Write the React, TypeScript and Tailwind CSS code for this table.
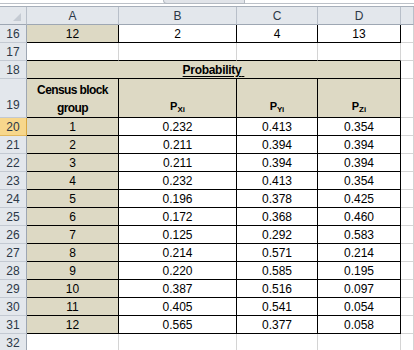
import React from "react";

const rows: [string, string, string, string][] = [
  ["1", "0.232", "0.413", "0.354"],
  ["2", "0.211", "0.394", "0.394"],
  ["3", "0.211", "0.394", "0.394"],
  ["4", "0.232", "0.413", "0.354"],
  ["5", "0.196", "0.378", "0.425"],
  ["6", "0.172", "0.368", "0.460"],
  ["7", "0.125", "0.292", "0.583"],
  ["8", "0.214", "0.571", "0.214"],
  ["9", "0.220", "0.585", "0.195"],
  ["10", "0.387", "0.516", "0.097"],
  ["11", "0.405", "0.541", "0.054"],
  ["12", "0.565", "0.377", "0.058"],
];

const hdrCol =
  "bg-[#e3e7ec] border-r border-b border-r-[#b8bfc9] border-b-[#9ea7b3] flex items-center justify-center text-[12px] text-[#2c3847]";
const rowHdr =
  "bg-[#e3e7ec] border-r border-b border-r-[#9ea7b3] border-b-[#c3c9d2] flex items-center justify-center text-[12px] text-[#2c3847]";
const rowHdrSel =
  "bg-[#f7d78c] border-r border-b border-r-[#d9a742] border-b-[#e2b85e] flex items-center justify-center text-[12px] text-[#2c3847]";
const blackTan =
  "bg-[#ddd9c4] border-r border-b border-black flex items-center justify-center text-[12px] text-black";
const blackWhite =
  "bg-white border-r border-b border-black flex items-center justify-center text-[12px] text-black";
const grid =
  "bg-white border-r border-b border-[#d4d4d4]";
const grayRightBlackBottom =
  "bg-white border-r border-b border-r-[#d4d4d4] border-b-black";

function P({ sub }: { sub: string }) {
  return (
    <span className="font-bold text-[11px] leading-none">
      P<span className="text-[8px] relative top-[2px]">{sub}</span>
    </span>
  );
}

export default function App() {
  return (
    <div className="w-[414px] h-[350px] overflow-hidden bg-white font-['Liberation_Sans',Arial,sans-serif]">
      {/* top strip */}
      <div className="relative h-[4px] border-b border-[#bcc1c8] bg-white">
        <div className="absolute left-[163px] top-0 w-[82px] h-[4px] bg-[#e1e4e9] border-x border-b border-[#b3b9c1] rounded-bl-[5px]" />
      </div>
      <div className="h-[3px] bg-white border-b border-[#a7afba]" />

      <div className="grid grid-cols-[27px_92px_118px_81px_83px_1fr] grid-rows-[18px_18px_18px_18px_39px_repeat(13,18px)]">
        {/* column header */}
        <div className={hdrCol}>
          <svg width="10" height="10" viewBox="0 0 10 10" className="ml-[8px] mt-[3px]">
            <polygon points="9,1 9,9 1,9" fill="#c5cbd3" />
          </svg>
        </div>
        <div className={hdrCol}>A</div>
        <div className={hdrCol}>B</div>
        <div className={hdrCol}>C</div>
        <div className={hdrCol}>D</div>
        <div className={hdrCol}></div>

        {/* row 16 */}
        <div className={rowHdr}>16</div>
        <div className={blackTan}>12</div>
        <div className={blackWhite}>2</div>
        <div className={blackWhite}>4</div>
        <div className={blackWhite}>13</div>
        <div className={grid}></div>

        {/* row 17 */}
        <div className={rowHdr}>17</div>
        <div className={grayRightBlackBottom}></div>
        <div className={grayRightBlackBottom}></div>
        <div className={grayRightBlackBottom}></div>
        <div className={grayRightBlackBottom}></div>
        <div className={grid}></div>

        {/* row 18 */}
        <div className={rowHdr}>18</div>
        <div className={`${blackTan} col-span-4`}>
          <span className="font-bold underline underline-offset-[2px] tracking-[-0.3px]">
            Probability{"\u00A0"}
          </span>
        </div>
        <div className={grid}></div>

        {/* row 19 */}
        <div className="bg-[#e3e7ec] border-r border-b border-r-[#9ea7b3] border-b-[#c3c9d2] flex items-end justify-center pb-[3px] text-[12px] text-[#2c3847]">
          19
        </div>
        <div className="bg-[#ddd9c4] border-r border-b border-black flex flex-col items-center justify-end text-[12px] font-bold leading-[18px] tracking-[-0.6px] text-black">
          <span>Census block</span>
          <span>group</span>
        </div>
        <div className="bg-[#ddd9c4] border-r border-b border-black flex items-end justify-center pb-[5px] text-black">
          <P sub="Xi" />
        </div>
        <div className="bg-[#ddd9c4] border-r border-b border-black flex items-end justify-center pb-[5px] text-black">
          <P sub="Yi" />
        </div>
        <div className="bg-[#ddd9c4] border-r border-b border-black flex items-end justify-center pb-[5px] text-black">
          <P sub="Zi" />
        </div>
        <div className={grid}></div>

        {rows.map((r, i) => (
          <React.Fragment key={i}>
            <div className={i === 0 ? rowHdrSel : rowHdr}>{20 + i}</div>
            <div className={blackTan}>{r[0]}</div>
            <div className={blackWhite}>{r[1]}</div>
            <div className={blackWhite}>{r[2]}</div>
            <div className={blackWhite}>{r[3]}</div>
            <div className={grid}></div>
          </React.Fragment>
        ))}

        {/* row 32 */}
        <div className={rowHdr}>32</div>
        <div className={grid}></div>
        <div className={grid}></div>
        <div className={grid}></div>
        <div className={grid}></div>
        <div className={grid}></div>
      </div>
    </div>
  );
}
